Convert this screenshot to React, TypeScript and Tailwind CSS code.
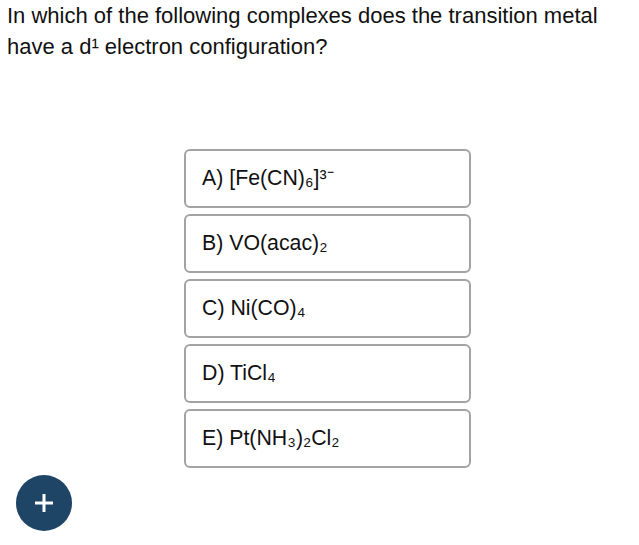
const options = [
  { key: "A", label: "[Fe(CN)₆]³⁻" },
  { key: "B", label: "VO(acac)₂" },
  { key: "C", label: "Ni(CO)₄" },
  { key: "D", label: "TiCl₄" },
  { key: "E", label: "Pt(NH₃)₂Cl₂" },
];

export default function App() {
  return (
    <main
      className="relative h-[545px] w-[639px] overflow-hidden bg-white text-[#111]"
      style={{ fontFamily: '"Liberation Sans", Arial, sans-serif' }}
    >
      <p className="w-[625px] px-[7px] pt-0 text-[22px] leading-[31px]">
        In which of the following complexes does the transition metal have a d¹ electron
        configuration?
      </p>

      <div className="ml-[184px] mt-[87px] flex w-[287px] flex-col gap-[6px]">
        {options.map((o) => (
          <div
            key={o.key}
            className="flex h-[59px] items-center rounded-[6px] border-2 border-[#a3a3a3] pl-[16px] text-[21.3px]"
          >
            {o.key}) {o.label}
          </div>
        ))}
      </div>

      <button className="absolute left-[16px] top-[475px] flex h-[56px] w-[56px] items-center justify-center rounded-full bg-[#1f4566]">
        <svg width="20" height="20" viewBox="0 0 20 20">
          <path d="M10 1v18M1 10h18" stroke="white" strokeWidth="3" />
        </svg>
      </button>
    </main>
  );
}
